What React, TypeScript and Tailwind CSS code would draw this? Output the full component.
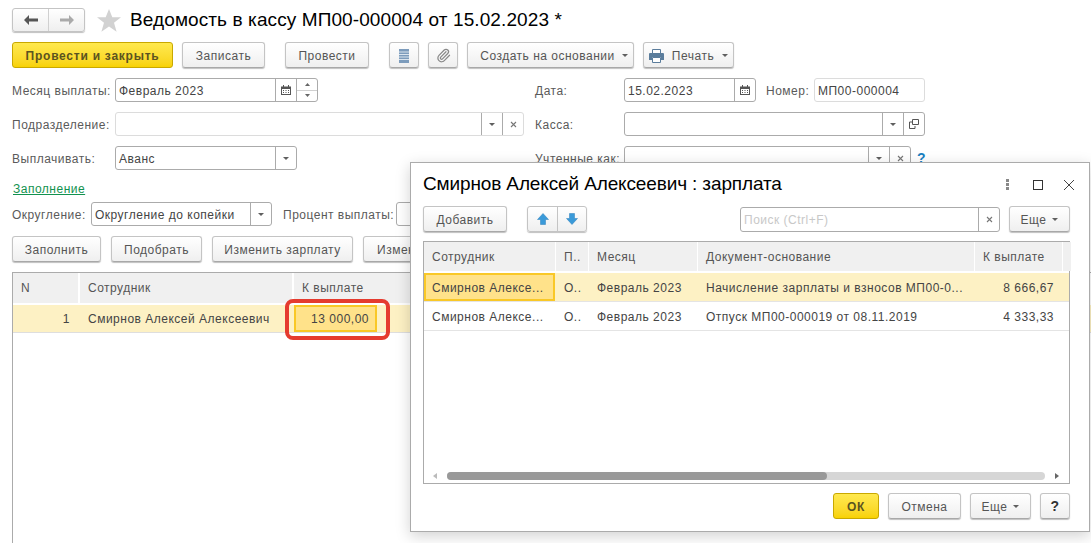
import React from "react";
import { Paperclip } from "lucide-react";

function Btn({ w, children, className = "" }: { w: string; children: React.ReactNode; className?: string }) {
  return (
    <div
      className={`flex shrink-0 items-center justify-center rounded-[3px] border border-[#c4c4c4] border-b-[#a8a8a8] bg-gradient-to-b from-white to-[#efefef] pt-px text-[#555] shadow-[0_1px_1px_rgba(0,0,0,0.25)] ${w} ${className}`}
    >
      {children}
    </div>
  );
}

function Caret() {
  return (
    <svg width="6" height="3" viewBox="0 0 6 3" className="shrink-0">
      <path d="M0 0h6L3 3z" fill="#5f5f5f" />
    </svg>
  );
}

function Calendar() {
  return (
    <svg width="10" height="10" viewBox="0 0 10 10">
      <path d="M0 1.500h2V0h1v1.500h4V0h1v1.500h2V10H0z" fill="#555" />
      <path d="M1 4h8v5H1z" fill="#fff" />
      <path d="M2 5h1v1H2zM4.500 5h1v1h-1zM7 5h1v1H7zM2 7h1v1H2zM4.500 7h1v1h-1zM7 7h1v1H7z" fill="#555" />
    </svg>
  );
}

function Cross() {
  return (
    <svg width="7" height="7" viewBox="0 0 7 7">
      <path d="M1 1l5 5M6 1L1 6" stroke="#777" strokeWidth="1.100" />
    </svg>
  );
}

function Cell({ children }: { children: React.ReactNode }) {
  return <div className="flex w-[21px] shrink-0 items-center justify-center self-stretch border-l border-[#ababab]">{children}</div>;
}

function Field({
  w,
  value,
  placeholder,
  light,
  children,
}: {
  w: string;
  value?: string;
  placeholder?: string;
  light?: boolean;
  children?: React.ReactNode;
}) {
  return (
    <div className={`flex h-6 shrink-0 items-center rounded-[3px] border bg-white ${light ? "border-[#dcdcdc]" : "border-[#ababab]"} ${w}`}>
      <div className={`flex-1 truncate pl-[3px] pt-px ${placeholder ? "text-[#c8c8c8]" : "text-[#444]"}`}>{value ?? placeholder}</div>
      {children}
    </div>
  );
}

function Label({ w, children }: { w: string; children: React.ReactNode }) {
  return <div className={`shrink-0 pt-px text-[#5a5a5a] ${w}`}>{children}</div>;
}

function Head({ w, children }: { w: string; children: React.ReactNode }) {
  return <div className={`flex shrink-0 items-center overflow-hidden bg-[#f0f0f0] pl-2 text-[#555] ${w}`}>{children}</div>;
}

function Td({ w, children, right, className = "" }: { w: string; children?: React.ReactNode; right?: boolean; className?: string }) {
  return (
    <div className={`flex shrink-0 items-center overflow-hidden whitespace-nowrap pt-px text-[#444] ${right ? "justify-end pr-2" : "pl-2"} ${w} ${className}`}>
      {children}
    </div>
  );
}

function PrinterIcon() {
  return (
    <svg width="15" height="14" viewBox="0 0 15 14">
      <path d="M3.500 0.500h8v4h-8z" fill="#fff" stroke="#5b7d9c" />
      <path d="M1 4h13a1 1 0 0 1 1 1v6h-3V8H3v3H0V5a1 1 0 0 1 1-1z" fill="#5b7d9c" />
      <path d="M3.500 8.500h8v5h-8z" fill="#fff" stroke="#5b7d9c" />
    </svg>
  );
}

function ListIcon() {
  return (
    <svg width="10" height="14" viewBox="0 0 10 14">
      <path d="M0 0h10v14H0z" fill="#7d9cbc" />
      <path d="M0 3h10M0 5.500h10M0 8h10M0 10.500h10" stroke="#dbe5ee" strokeWidth="1" />
    </svg>
  );
}

function BlueArrow({ down }: { down?: boolean }) {
  return (
    <svg width="12" height="12" viewBox="0 0 12 12" className={down ? "rotate-180" : ""}>
      <path d="M6 0.500L11.500 6.500H8.500V11.500H3.500V6.500H0.500z" fill="#3a9ad9" stroke="#2b7fba" strokeWidth="0.500" />
    </svg>
  );
}

export default function App() {
  return (
    <div className="relative h-[543px] w-[1091px] overflow-hidden bg-white font-['Liberation_Sans',sans-serif] text-[12px] tracking-[0.5px]">
      <div className="flex flex-col pl-3 pt-2">
        {/* header */}
        <div className="flex h-6 items-center">
          <div className="flex h-6 w-[73px] items-stretch rounded-[3px] border border-[#c4c4c4] bg-gradient-to-b from-white to-[#efefef] shadow-[0_1px_1px_rgba(0,0,0,0.25)]">
            <div className="flex w-9 items-center justify-center border-r border-[#d0d0d0]">
              <svg width="14" height="10" viewBox="0 0 14 10">
                <path d="M5 0v3.500h9v3H5V10L0 5z" fill="#555" />
              </svg>
            </div>
            <div className="flex flex-1 items-center justify-center">
              <svg width="14" height="10" viewBox="0 0 14 10">
                <path d="M9 0v3.500H0v3h9V10l5-5z" fill="#aaa" />
              </svg>
            </div>
          </div>
          <svg width="24" height="23" viewBox="0 0 24 23" className="ml-3">
            <path d="M12 0l3.300 8.200H24l-7 5.500 2.600 9L12 17.500 4.400 22.700l2.600-9-7-5.500h8.700z" fill="#d2d2d2" />
          </svg>
          <div className="ml-[9px] text-[19px] tracking-[0.1px] text-black">Ведомость в кассу МП00-000004 от 15.02.2023 *</div>
        </div>

        {/* toolbar */}
        <div className="mt-[10px] flex h-[26px] items-stretch">
          <div className="flex w-[161px] items-center justify-center rounded-[3px] border border-[#c9a800] bg-gradient-to-b from-[#ffe94d] to-[#f8d200] pt-px font-bold tracking-[0.75px] text-[#5b5320]">
            Провести и закрыть
          </div>
          <Btn w="w-[83px]" className="ml-[9px]">Записать</Btn>
          <Btn w="w-[84px]" className="ml-5">Провести</Btn>
          <Btn w="w-[30px]" className="ml-5"><ListIcon /></Btn>
          <Btn w="w-[30px]" className="ml-[9px]"><Paperclip size={15} color="#888" /></Btn>
          <Btn w="w-[167px]" className="ml-[9px] gap-[7px] pl-[7px]">Создать на основании <Caret /></Btn>
          <Btn w="w-[91px]" className="ml-[9px] gap-2"><PrinterIcon /> Печать <Caret /></Btn>
        </div>

        {/* fields */}
        <div className="mt-[10px] flex items-center">
          <Label w="w-[103px]">Месяц выплаты:</Label>
          <Field w="w-[203px]" value="Февраль 2023">
            <Cell><Calendar /></Cell>
            <div className="flex w-[21px] shrink-0 flex-col items-stretch self-stretch border-l border-[#ababab]">
              <div className="flex flex-1 items-center justify-center border-b border-[#d0d0d0]">
                <svg width="5" height="3" viewBox="0 0 5 3"><path d="M0 3h5L2.500 0z" fill="#666" /></svg>
              </div>
              <div className="flex flex-1 items-center justify-center">
                <svg width="5" height="3" viewBox="0 0 5 3"><path d="M0 0h5L2.500 3z" fill="#666" /></svg>
              </div>
            </div>
          </Field>
          <Label w="ml-[217px] w-[89px]">Дата:</Label>
          <Field w="w-[132px]" value="15.02.2023">
            <Cell><Calendar /></Cell>
          </Field>
          <Label w="ml-[10px] w-[48px]">Номер:</Label>
          <Field w="w-[111px]" value="МП00-000004" light />
        </div>

        <div className="mt-[10px] flex items-center">
          <Label w="w-[103px]">Подразделение:</Label>
          <Field w="w-[409px]" value="" light>
            <Cell><Caret /></Cell>
            <Cell><Cross /></Cell>
          </Field>
          <Label w="ml-[11px] w-[89px]">Касса:</Label>
          <Field w="w-[301px]" value="">
            <Cell><Caret /></Cell>
            <Cell>
              <svg width="10" height="10" viewBox="0 0 10 10" fill="none" stroke="#555">
                <path d="M3.500 0.500h6v5h-6z" />
                <path d="M3 3H0.500v6.500H6V7" />
              </svg>
            </Cell>
          </Field>
        </div>

        <div className="mt-[10px] flex items-center">
          <Label w="w-[103px]">Выплачивать:</Label>
          <Field w="w-[182px]" value="Аванс">
            <Cell><Caret /></Cell>
          </Field>
          <Label w="ml-[238px] w-[89px]">Учтенные как:</Label>
          <Field w="w-[287px]" value="">
            <Cell><Caret /></Cell>
            <Cell><Cross /></Cell>
          </Field>
          <div className="ml-[6px] text-[14px] font-bold text-[#1a7fc1]">?</div>
        </div>

        <div className="ml-px mt-[12px] h-[14px] leading-[14px] text-[#12924f] underline">Заполнение</div>

        <div className="mt-[6px] flex items-center">
          <Label w="w-[79px]">Округление:</Label>
          <Field w="w-[181px]" value="Округление до копейки">
            <Cell><Caret /></Cell>
          </Field>
          <Label w="ml-[11px] w-[113px]">Процент выплаты:</Label>
          <Field w="w-[100px]" value="" />
        </div>

        <div className="mt-[10px] flex h-[26px] items-stretch">
          <Btn w="w-[89px]">Заполнить</Btn>
          <Btn w="w-[91px]" className="ml-[10px]">Подобрать</Btn>
          <Btn w="w-[141px]" className="ml-[10px]">Изменить зарплату</Btn>
          <Btn w="w-[141px]" className="ml-[10px] !justify-start pl-[13px]">Изменить</Btn>
        </div>

        {/* main table */}
        <div className="mt-[10px] h-[300px] w-[1085px] border border-[#ababab]">
          <div className="flex h-[30px] gap-[2px]">
            <Head w="w-[65px]">N</Head>
            <Head w="w-[212px]">Сотрудник</Head>
            <Head w="w-[300px]">К выплате</Head>
          </div>
          <div className="mt-[2px] flex h-[27px] gap-[2px] bg-[#fdf1c4]">
            <Td w="w-[65px]" right>1</Td>
            <Td w="w-[212px]">Смирнов Алексей Алексеевич</Td>
            <Td w="w-[83px]" right className="border-2 border-[#f9c827] bg-[#ffe28a] !pr-[6px]">13 000,00</Td>
          </div>
          <div className="h-px bg-[#dedede]" />
        </div>
      </div>

      {/* annotation */}
      <div className="absolute left-[285px] top-[299px] h-[41px] w-[105px] rounded-[8px] border-[4px] border-[#e53b2f]" />

      {/* dialog */}
      <div className="absolute left-[410px] top-[162px] flex h-[370px] w-[680px] flex-col border border-[#ababab] bg-white pl-3 pr-[19px] shadow-[0_4px_14px_rgba(0,0,0,0.18)]">
        <div className="flex h-[43px] shrink-0 items-center justify-between">
          <div className="text-[19px] tracking-[-0.13px] text-black">Смирнов Алексей Алексеевич : зарплата</div>
          <div className="-mr-[5px] flex items-center">
            <svg width="3" height="11" viewBox="0 0 3 11"><path d="M0 0h3v3H0zM0 4h3v3H0zM0 8h3v3H0z" fill="#888" /></svg>
            <div className="ml-[24px] h-[10px] w-[10px] border border-[#333]" />
            <svg width="12" height="12" viewBox="0 0 12 12" className="ml-[20px]"><path d="M1 1l10 10M11 1L1 11" stroke="#444" /></svg>
          </div>
        </div>

        <div className="flex h-[26px] shrink-0 items-stretch">
          <Btn w="w-[84px]">Добавить</Btn>
          <div className="ml-5 flex w-[60px] items-stretch rounded-[3px] border border-[#c4c4c4] bg-gradient-to-b from-white to-[#efefef] shadow-[0_1px_1px_rgba(0,0,0,0.25)]">
            <div className="flex w-[30px] items-center justify-center border-r border-[#c4c4c4]"><BlueArrow /></div>
            <div className="flex flex-1 items-center justify-center"><BlueArrow down /></div>
          </div>
          <div className="ml-[153px] self-end">
            <Field w="!h-[25px] w-[260px]" placeholder="Поиск (Ctrl+F)">
              <Cell><Cross /></Cell>
            </Field>
          </div>
          <Btn w="w-[61px]" className="ml-[9px] gap-[6px]">Еще <Caret /></Btn>
        </div>

        <div className="relative mt-[9px] h-[243px] shrink-0 border border-[#ababab]">
          <div className="flex h-[29px] gap-px">
            <Head w="w-[131px]">Сотрудник</Head>
            <Head w="w-[32px]">П..</Head>
            <Head w="w-[108px]">Месяц</Head>
            <Head w="w-[276px]">Документ-основание</Head>
            <Head w="w-[87px]">К выплате</Head>
            <Head w="flex-1">{""}</Head>
          </div>
          <div className="mt-[2px] flex h-[28px] gap-px bg-[#fdf1c4]">
            <Td w="w-[131px]" className="border-2 border-[#f9c827] bg-[#ffe28a] !pl-[6px]">Смирнов Алексе...</Td>
            <Td w="w-[32px]">О..</Td>
            <Td w="w-[108px]">Февраль 2023</Td>
            <Td w="w-[276px]">Начисление зарплаты и взносов МП00-0...</Td>
            <Td w="w-[87px]" right>8 666,67</Td>
          </div>
          <div className="h-px bg-[#e4e4e4]" />
          <div className="flex h-[28px] gap-px">
            <Td w="w-[131px]">Смирнов Алексе...</Td>
            <Td w="w-[32px]">О..</Td>
            <Td w="w-[108px]">Февраль 2023</Td>
            <Td w="w-[276px]">Отпуск МП00-000019 от 08.11.2019</Td>
            <Td w="w-[87px]" right>4 333,33</Td>
          </div>
          <div className="h-px bg-[#e4e4e4]" />

          {/* scrollbar */}
          <div className="absolute bottom-[3px] left-[9px] right-[10px] flex h-2 items-center">
            <svg width="4" height="6" viewBox="0 0 4 6"><path d="M4 0v6L0 3z" fill="#bbb" /></svg>
            <div className="ml-[10px] h-2 flex-1 rounded-full bg-[#d6d6d6]">
              <div className="h-2 w-[380px] rounded-full bg-[#999]" />
            </div>
            <svg width="4" height="6" viewBox="0 0 4 6" className="ml-[10px]"><path d="M0 0v6l4-3z" fill="#666" /></svg>
          </div>
        </div>

        <div className="mt-[9px] flex h-[26px] shrink-0 items-stretch justify-end">
          <div className="flex w-[46px] items-center justify-center rounded-[3px] border border-[#c9a800] bg-gradient-to-b from-[#ffe94d] to-[#f8d200] pt-px font-bold tracking-[0.75px] text-[#5b5320]">ОК</div>
          <Btn w="w-[73px]" className="ml-[9px]">Отмена</Btn>
          <Btn w="w-[61px]" className="ml-[9px] gap-[6px]">Еще <Caret /></Btn>
          <Btn w="w-[30px]" className="ml-[9px] text-[14px] font-bold !text-[#333]">?</Btn>
        </div>
      </div>
    </div>
  );
}
